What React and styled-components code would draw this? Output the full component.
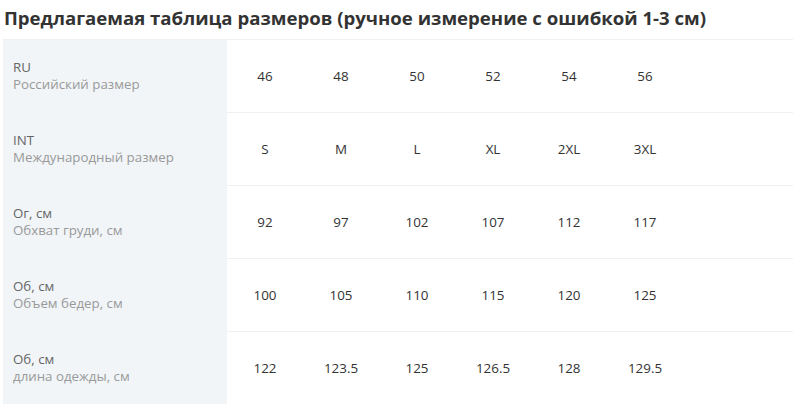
import React from "react";
import styled, { createGlobalStyle } from "styled-components";

const Global = createGlobalStyle`
  html, body { margin: 0; padding: 0; background: #fff; }
  body { font-family: "Open Sans", "Noto Sans", sans-serif; }
`;

const Page = styled.div`
  width: 793px;
  height: 405px;
  overflow: hidden;
  display: flex;
  flex-direction: column;
`;

const Title = styled.h2`
  margin: 0;
  padding: 5px 0 0 4px;
  height: 39px;
  box-sizing: border-box;
  font-size: 18.6px;
  font-weight: 700;
  color: #333;
  line-height: 26px;
  white-space: nowrap;
`;

const Table = styled.div`
  margin-left: 3px;
  display: grid;
  grid-template-columns: 224px repeat(6, 76px) 1fr;
  grid-auto-rows: 73px;
`;

const Head = styled.div`
  background: #f1f5f8;
  border-top: 1px solid ${(p) => (p.$first ? "#eef0f2" : "#f1f5f8")};
  display: flex;
  flex-direction: column;
  justify-content: center;
  padding-left: 10px;
  font-size: 13.3px;
  line-height: 17px;
`;

const Code = styled.span`
  color: #666;
`;

const Name = styled.span`
  color: #999;
`;

const Cell = styled.div`
  border-top: 1px solid #f0f0f0;
  display: flex;
  align-items: center;
  justify-content: center;
  font-size: 13.4px;
  color: #333;
`;

const rows = [
  ["RU", "Российский размер", ["46", "48", "50", "52", "54", "56"]],
  ["INT", "Международный размер", ["S", "M", "L", "XL", "2XL", "3XL"]],
  ["Ог, см", "Обхват груди, см", ["92", "97", "102", "107", "112", "117"]],
  ["Об, см", "Объем бедер, см", ["100", "105", "110", "115", "120", "125"]],
  ["Об, см", "длина одежды, см", ["122", "123.5", "125", "126.5", "128", "129.5"]],
];

export default function App() {
  return (
    <Page>
      <Global />
      <Title>Предлагаемая таблица размеров (ручное измерение с ошибкой 1-3 см)</Title>
      <Table>
        {rows.map(([code, name, vals], i) => (
          <React.Fragment key={i}>
            <Head $first={i === 0}>
              <Code>{code}</Code>
              <Name>{name}</Name>
            </Head>
            {vals.map((v, j) => (
              <Cell key={j}>{v}</Cell>
            ))}
            <Cell />
          </React.Fragment>
        ))}
      </Table>
    </Page>
  );
}
